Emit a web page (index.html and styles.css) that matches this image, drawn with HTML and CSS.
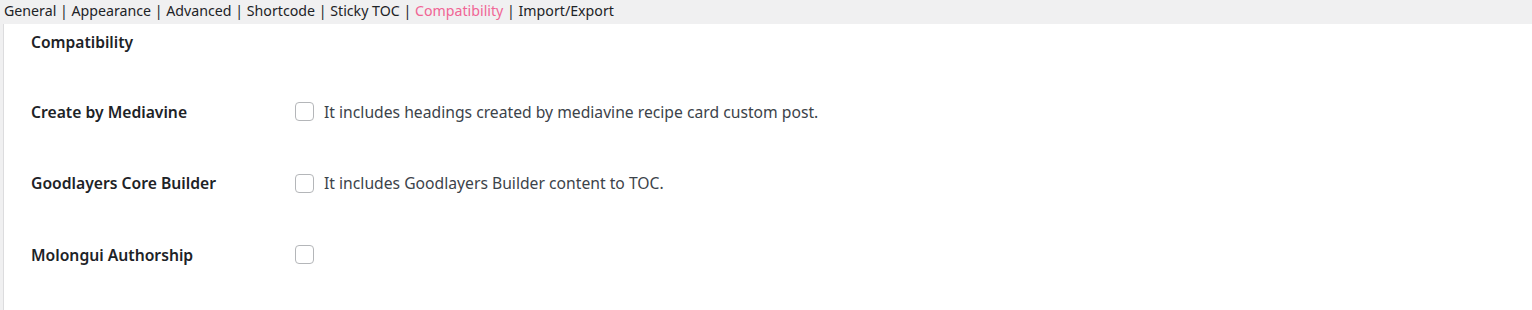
FILE: index.html
```html
<!DOCTYPE html>
<html lang="en">
<head>
  <meta charset="UTF-8">
  <title>TOC Settings - Compatibility</title>
  <link rel="stylesheet" href="styles.css">
</head>
<body>
  <div class="tabs">
    <a href="#">General</a> |
    <a href="#">Appearance</a> |
    <a href="#">Advanced</a> |
    <a href="#">Shortcode</a> |
    <a href="#">Sticky TOC</a> |
    <a href="#" class="active">Compatibility</a> |
    <a href="#">Import/Export</a>
  </div>

  <div class="panel">
    <h3 class="section-title">Compatibility</h3>

    <div class="form-table">
      <div class="row">
        <div class="label">Create by Mediavine</div>
        <label class="field">
          <input type="checkbox">
          <span class="desc">It includes headings created by mediavine recipe card custom post.</span>
        </label>
      </div>

      <div class="row">
        <div class="label">Goodlayers Core Builder</div>
        <label class="field">
          <input type="checkbox">
          <span class="desc">It includes Goodlayers Builder content to TOC.</span>
        </label>
      </div>

      <div class="row">
        <div class="label">Molongui Authorship</div>
        <label class="field">
          <input type="checkbox">
        </label>
      </div>
    </div>
  </div>
</body>
</html>
```

FILE: styles.css
```css
html, body {
  height: 100%;
}

body {
  margin: 0;
  background-color: #f0f0f1;
  color: #1d2327;
  font-family: 'Noto Sans', 'Open Sans', sans-serif;
  font-size: 15.7px;
  display: flex;
  flex-direction: column;
}

.tabs {
  height: 24px;
  line-height: 22px;
  padding: 0 4px;
  font-size: 14.2px;
  white-space: nowrap;
}

.tabs a {
  color: #1d2327;
  text-decoration: none;
}

.tabs a.active {
  color: #f06595;
}

.panel {
  flex: 1;
  margin-left: 3px;
  background-color: #fff;
  border-left: 1px solid #dcdcde;
  padding-left: 27px;
}

.section-title {
  margin: 0;
  padding-top: 8px;
  font-size: 15.6px;
  font-weight: 600;
  line-height: 20px;
}

.form-table {
  padding-top: 24px;
}

.row {
  display: flex;
  align-items: center;
  height: 71.5px;
}

.label {
  width: 264px;
  font-weight: 600;
}

.field {
  display: flex;
  align-items: center;
  gap: 10px;
}

.field input {
  appearance: none;
  width: 19px;
  height: 19px;
  margin: 0;
  border: 1px solid #b4b6b9;
  border-radius: 4px;
  background-color: #fff;
}

.desc {
  color: #3c434a;
}
```
